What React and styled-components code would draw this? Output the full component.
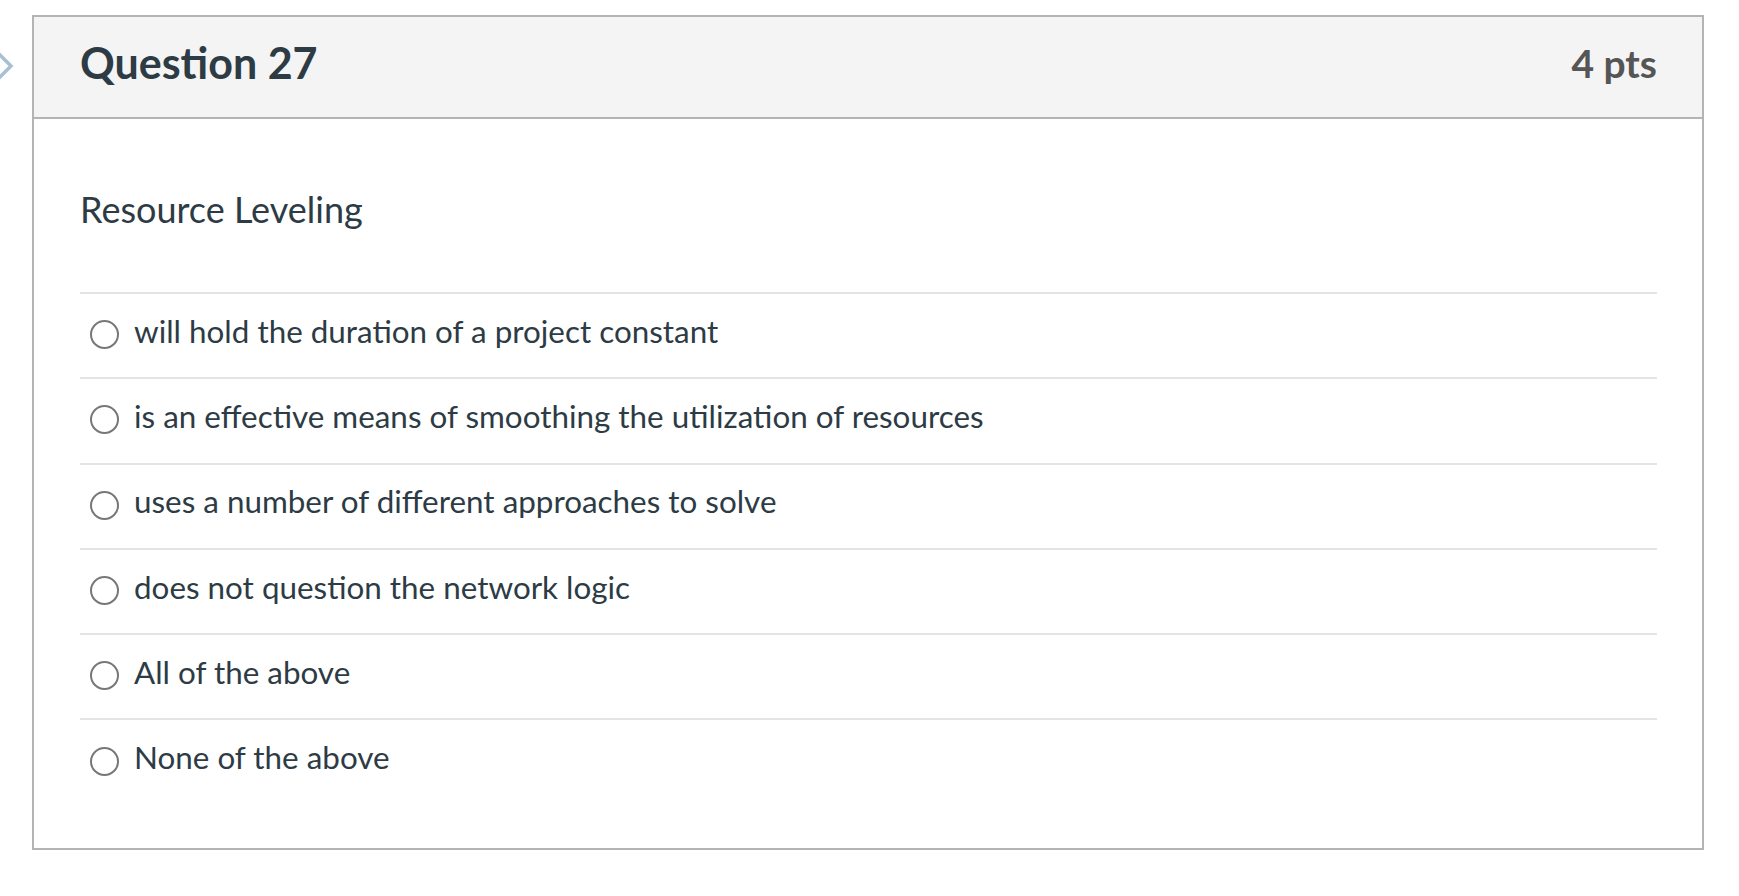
import React from 'react';
import styled, { createGlobalStyle } from 'styled-components';

const GlobalStyle = createGlobalStyle`
  body {
    margin: 0;
    background: #ffffff;
    font-family: Lato, 'Liberation Sans', sans-serif;
    color: #2d3b45;
  }
`;

const Page = styled.div`
  display: flex;
  align-items: flex-start;
  padding: 15px 35px 40px 0;
`;

const Gutter = styled.div`
  width: 32px;
  flex-shrink: 0;
  padding-top: 31px;
  display: flex;
`;

const QuestionCard = styled.div`
  flex: 1;
  border: 2px solid #b4b4b4;
  background: #ffffff;
`;

const Header = styled.div`
  display: flex;
  align-items: center;
  justify-content: space-between;
  height: 100px;
  padding: 0 45px 0 46px;
  background: #f4f4f4;
  border-bottom: 2px solid #b4b4b4;
`;

const Title = styled.h2`
  margin: 0 0 10px;
  font-size: 43px;
  font-weight: 700;
  color: #2d3b45;
`;

const Points = styled.div`
  margin-bottom: 8px;
  font-size: 39px;
  font-weight: 700;
  color: #555555;
`;

const Body = styled.div`
  padding: 68px 45px 44px 46px;
`;

const Prompt = styled.p`
  margin: 0 0 61px;
  font-size: 36px;
  line-height: 44px;
`;

const Answers = styled.div`
  display: flex;
  flex-direction: column;
`;

const Answer = styled.label`
  display: flex;
  align-items: center;
  gap: 15px;
  box-sizing: border-box;
  height: 85.3px;
  padding: 0 0 10px 10px;
  border-top: 2px solid #e4e4e4;
  font-size: 31.4px;
  color: #2d3b45;
`;

const Radio = styled.span`
  width: 25px;
  height: 25px;
  margin-top: 8px;
  border-radius: 50%;
  border: 2px solid #777777;
  flex-shrink: 0;
  background: #ffffff;
`;

const Chevron = () => (
  <svg width="14" height="40" viewBox="0 0 14 40">
    <path d="M-6 3 L11 20 L-6 37" fill="none" stroke="#a7c1d3" strokeWidth="3.5" />
  </svg>
);

const answers = [
  'will hold the duration of a project constant',
  'is an effective means of smoothing the utilization of resources',
  'uses a number of different approaches to solve',
  'does not question the network logic',
  'All of the above',
  'None of the above'
];

export default function App() {
  return (
    <>
      <GlobalStyle />
      <Page>
        <Gutter>
          <Chevron />
        </Gutter>
        <QuestionCard>
          <Header>
            <Title>Question 27</Title>
            <Points>4 pts</Points>
          </Header>
          <Body>
            <Prompt>Resource Leveling</Prompt>
            <Answers>
              {answers.map(text => (
                <Answer key={text}>
                  <Radio />
                  <span>{text}</span>
                </Answer>
              ))}
            </Answers>
          </Body>
        </QuestionCard>
      </Page>
    </>
  );
}
